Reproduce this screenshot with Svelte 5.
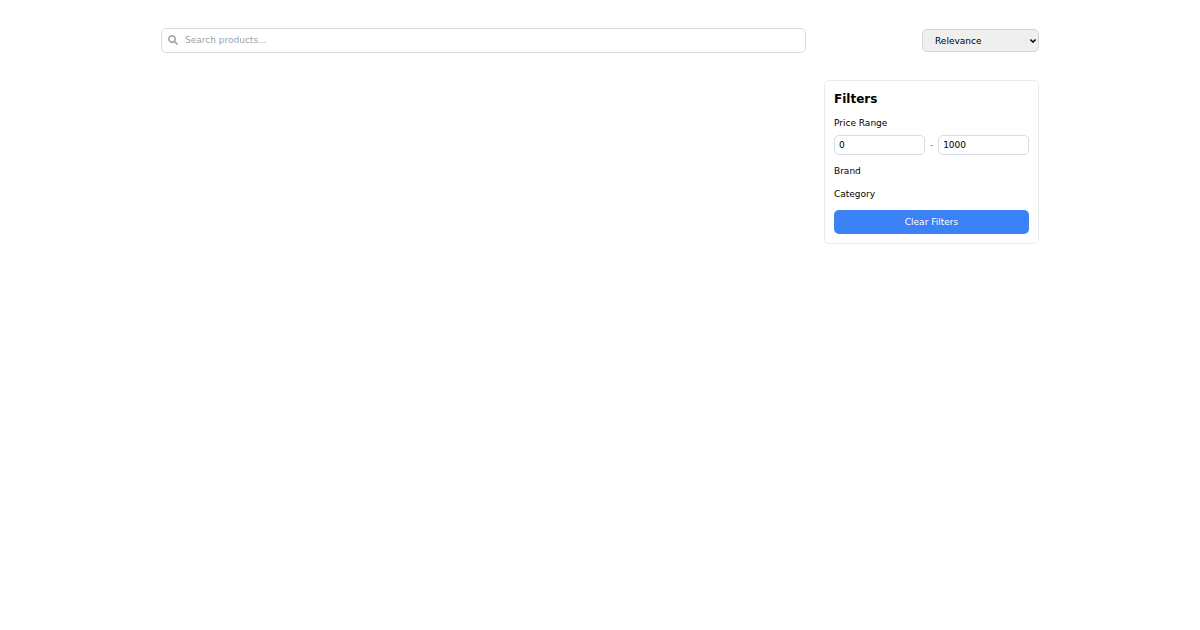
<script>
  let query = $state('');
  let sort = $state('relevance');
  let minPrice = $state('0');
  let maxPrice = $state('1000');

  function clearFilters() {
    minPrice = '0';
    maxPrice = '1000';
  }
</script>

<main class="page">
  <header class="toolbar">
    <label class="search">
      <svg class="icon" viewBox="0 0 512 512" aria-hidden="true">
        <path
          fill="currentColor"
          d="M505 442.700 405.300 343c-4.500-4.500-10.600-7-17-7H372c27.600-35.300 44-79.700 44-128C416 93.100 322.900 0 208 0S0 93.100 0 208s93.100 208 208 208c48.300 0 92.700-16.400 128-44v16.300c0 6.400 2.500 12.500 7 17l99.700 99.700c9.400 9.400 24.600 9.400 33.900 0l28.300-28.300c9.400-9.400 9.400-24.600.1-34zM208 336c-70.700 0-128-57.200-128-128 0-70.700 57.200-128 128-128 70.700 0 128 57.200 128 128 0 70.700-57.200 128-128 128z"
        />
      </svg>
      <input type="text" placeholder="Search products..." aria-label="Search products" bind:value={query} />
    </label>
    <div class="sort">
      <select aria-label="Sort by" bind:value={sort}>
        <option value="relevance">Relevance</option>
        <option value="low">Price: Low to High</option>
        <option value="high">Price: High to Low</option>
      </select>
      <svg class="chevron" viewBox="0 0 6 4" aria-hidden="true">
        <path d="M.4.600 3 3.100 5.600.600" fill="none" stroke="#000" stroke-width="1.400" />
      </svg>
    </div>
  </header>

  <aside class="filters">
    <h2>Filters</h2>
    <section>
      <h3>Price Range</h3>
      <div class="range">
        <input type="text" inputmode="numeric" aria-label="Minimum price" bind:value={minPrice} />
        <span>-</span>
        <input type="text" inputmode="numeric" aria-label="Maximum price" bind:value={maxPrice} />
      </div>
    </section>
    <section><h3>Brand</h3></section>
    <section><h3>Category</h3></section>
    <button type="button" onclick={clearFilters}>Clear Filters</button>
  </aside>
</main>

<style>
  :global(body) {
    margin: 0;
    background: #fff;
  }

  .page,
  input,
  select,
  button {
    box-sizing: border-box;
    font-family: 'DejaVu Sans', sans-serif;
    font-size: 9px;
    line-height: 14px;
    color: #000;
  }

  .page {
    max-width: 898px;
    margin: 0 auto;
    padding: 28px 10px;
    display: flex;
    flex-direction: column;
    gap: 27px;
  }

  .toolbar {
    display: flex;
    align-items: center;
    justify-content: space-between;
    gap: 20px;
  }

  .search {
    flex: 0 1 645px;
    min-width: 0;
    box-sizing: border-box;
    display: flex;
    align-items: center;
    gap: 7px;
    padding: 0 6px 1px;
    border: 1px solid #d9dce1;
    border-radius: 5px;
    color: #9ca3af;
  }

  .icon {
    flex: none;
    width: 10px;
    height: 10px;
  }

  .search input {
    flex: 1;
    min-width: 0;
    height: 22px;
    padding: 0;
    border: 0;
    outline: 0;
    background: transparent;
  }

  .search input::placeholder {
    color: #9ca3af;
    opacity: 1;
  }

  .sort {
    position: relative;
    width: 117px;
  }

  .sort select {
    display: block;
    appearance: none;
    width: 100%;
    height: 23px;
    padding: 0 12px;
    border: 1px solid #d1d5db;
    border-radius: 5px;
    background: #efefef;
  }

  .chevron {
    position: absolute;
    top: 10px;
    right: 3px;
    width: 6px;
    height: 4px;
    pointer-events: none;
  }

  .filters {
    box-sizing: border-box;
    width: 215px;
    align-self: flex-end;
    display: flex;
    flex-direction: column;
    gap: 9px;
    padding: 10px 9px 9px;
    border: 1px solid #e9ebee;
    border-radius: 5px;
  }

  h2,
  h3 {
    margin: 0;
  }

  h2 {
    font-size: 12px;
    line-height: 16px;
    font-weight: 700;
  }

  h3 {
    font-size: 9px;
    line-height: 14px;
    font-weight: 400;
  }

  .range {
    display: flex;
    align-items: center;
    gap: 5px;
    margin-top: 5px;
    color: #6b7280;
  }

  .range input {
    flex: 1;
    min-width: 0;
    height: 20px;
    padding: 0 4px;
    border: 1px solid #d9dce1;
    border-radius: 5px;
    background: #fff;
  }

  button {
    height: 24px;
    padding: 0 10px;
    border: 0;
    border-radius: 5px;
    background: #3b82f6;
    color: #fff;
    cursor: pointer;
  }
</style>
